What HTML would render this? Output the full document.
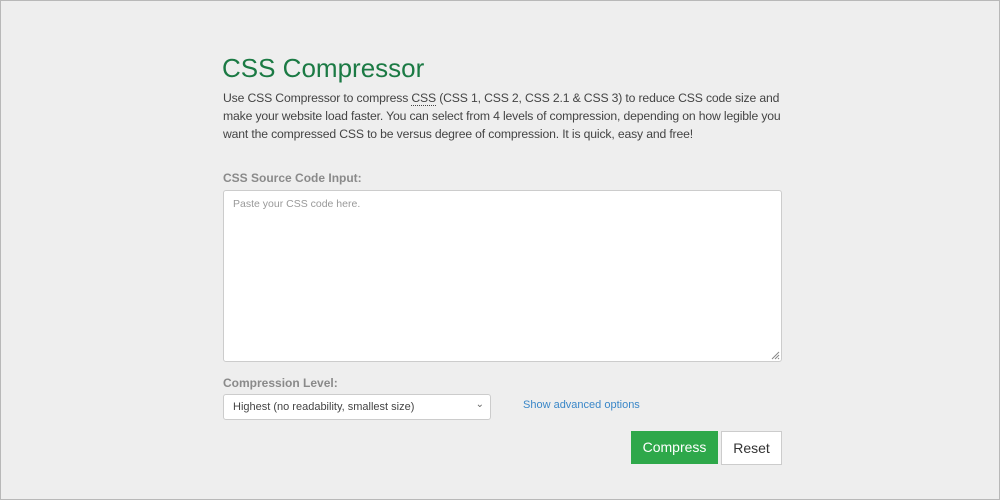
<!DOCTYPE html>
<html><head><style>
html,body{margin:0;padding:0}
body{width:998px;height:498px;background:#eeeeee;border:1px solid #b8b8b8;position:relative;font-family:"Liberation Sans",Arial,sans-serif;overflow:hidden}
.a{position:absolute}
h1{position:absolute;left:221px;top:51px;margin:0;font-size:26px;font-weight:normal;color:#1b7a44;line-height:32px}
p{position:absolute;left:222px;top:88px;width:563px;margin:0;font-size:12.2px;letter-spacing:-0.15px;line-height:18px;color:#444}
p u{text-decoration:none;border-bottom:1px dotted #444}
.lbl{font-size:12px;font-weight:bold;color:#8a8a8a}
.ta{left:222px;top:189px;width:557px;height:170px;background:#fff;border:1px solid #ccc;border-radius:3px}
.ph{left:9px;top:7px;font-size:10.5px;color:#999}
.sel{left:222px;top:393px;width:266px;height:24px;background:#fff;border:1px solid #ccc;border-radius:3px;font-size:11px;color:#444}
.btn{top:430px;height:33px;line-height:33px;font-size:14px;text-align:center}
</style></head><body>
<h1>CSS Compressor</h1>
<p>Use CSS Compressor to compress <u>CSS</u> (CSS 1, CSS 2, CSS 2.1 &amp; CSS 3) to reduce CSS code size and make your website load faster. You can select from 4 levels of compression, depending on how legible you want the compressed CSS to be versus degree of compression. It is quick, easy and free!</p>
<div class="a lbl" style="left:222px;top:170px">CSS Source Code Input:</div>
<div class="a ta"><div class="a ph">Paste your CSS code here.</div>
<svg class="a" style="right:1px;bottom:1px" width="10" height="10"><path d="M9 2L2 9M9 5L5 9M9 8L8 9" stroke="#888" stroke-width="1"/></svg></div>
<div class="a lbl" style="left:222px;top:375px">Compression Level:</div>
<div class="a sel"><span class="a" style="left:9px;top:6px">Highest (no readability, smallest size)</span><span class="a" style="right:6px;top:4px;font-size:10px;color:#666">&#8964;</span></div>
<div class="a" style="left:522px;top:398px;font-size:11px;color:#3a87c8">Show advanced options</div>
<div class="a btn" style="left:630px;width:87px;background:#2ea84a;color:#fff">Compress</div>
<div class="a btn" style="left:720px;width:59px;background:#fff;border:1px solid #ccc;height:32px;color:#333">Reset</div>
</body></html>
